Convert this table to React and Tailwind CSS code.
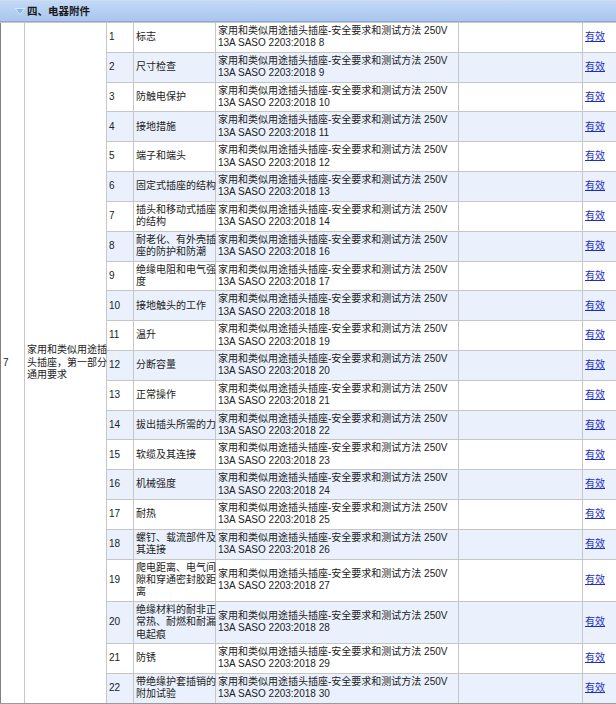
const FONT = { fontFamily: '"Liberation Sans", "Noto Sans CJK SC", sans-serif' };

const STD = "家用和类似用途插头插座-安全要求和测试方法 250V";

const ITEMS = [
  [["标志"], 8],
  [["尺寸检查"], 9],
  [["防触电保护"], 10],
  [["接地措施"], 11],
  [["端子和端头"], 12],
  [["固定式插座的结构"], 13],
  [["插头和移动式插座", "的结构"], 14],
  [["耐老化、有外壳插", "座的防护和防潮"], 16],
  [["绝缘电阻和电气强", "度"], 17],
  [["接地触头的工作"], 18],
  [["温升"], 19],
  [["分断容量"], 20],
  [["正常操作"], 21],
  [["拔出插头所需的力"], 22],
  [["软缆及其连接"], 23],
  [["机械强度"], 24],
  [["耐热"], 25],
  [["螺钉、载流部件及", "其连接"], 26],
  [["爬电距离、电气间", "隙和穿通密封胶距", "离"], 27],
  [["绝缘材料的耐非正", "常热、耐燃和耐漏", "电起痕"], 28],
  [["防锈"], 29],
  [["带绝缘护套插销的", "附加试验"], 30],
];

const cell = "border border-[#c6c6c6] align-middle pl-[2px] pr-0 py-[2px] whitespace-nowrap";

function Lines({ lines }) {
  return lines.map((l, i) => (
    <span key={i}>
      {i > 0 && <br />}
      {l}
    </span>
  ));
}

export default function App() {
  return (
    <div className="w-[616px] h-[704px] overflow-hidden bg-white text-[10px] leading-[12.4px] text-[#222]" style={FONT}>
      <div className="h-[22px] flex items-center border-t border-[#d0dcec] border-b border-b-[#8fa8cc] bg-gradient-to-b from-[#c2d9f7] to-[#a9c6ef]">
        <svg width="10" height="7" viewBox="0 0 10 7" className="ml-[15px] mr-[2px]">
          <polygon points="0.5,0.5 9.5,0.5 5,6.5" fill="#86b7ec" stroke="#e8f2fd" strokeWidth="0.8" />
        </svg>
        <span className="font-bold text-[10.5px] text-[#1a1a1a]">四、电器附件</span>
      </div>
      <table className="w-[616px] table-fixed border-collapse border-l border-l-[#808080] border-b-2 border-b-[#9a9a9a]">
        <colgroup>
          <col className="w-[24px]" />
          <col className="w-[82px]" />
          <col className="w-[27px]" />
          <col className="w-[82px]" />
          <col className="w-[243px]" />
          <col className="w-[124px]" />
          <col className="w-[34px]" />
        </colgroup>
        <tbody>
          {ITEMS.map(([name, clause], i) => (
            <tr key={i} className={i % 2 === 1 ? "bg-[#eaf1fc]" : "bg-white"}>
              {i === 0 && (
                <>
                  <td rowSpan={ITEMS.length} className={`${cell} bg-white border-l-[#808080]`}>
                    7
                  </td>
                  <td rowSpan={ITEMS.length} className={`${cell} bg-white`}>
                    <Lines lines={["家用和类似用途插", "头插座，第一部分", "通用要求"]} />
                  </td>
                </>
              )}
              <td className={cell}>{i + 1}</td>
              <td className={cell}>
                <Lines lines={name} />
              </td>
              <td className={cell}>
                {STD}
                <br />
                13A SASO 2203:2018 {clause}
              </td>
              <td className={cell}></td>
              <td className={cell}>
                <a href="#" className="text-[#1c2fc4] underline">
                  有效
                </a>
              </td>
            </tr>
          ))}
        </tbody>
      </table>
    </div>
  );
}
